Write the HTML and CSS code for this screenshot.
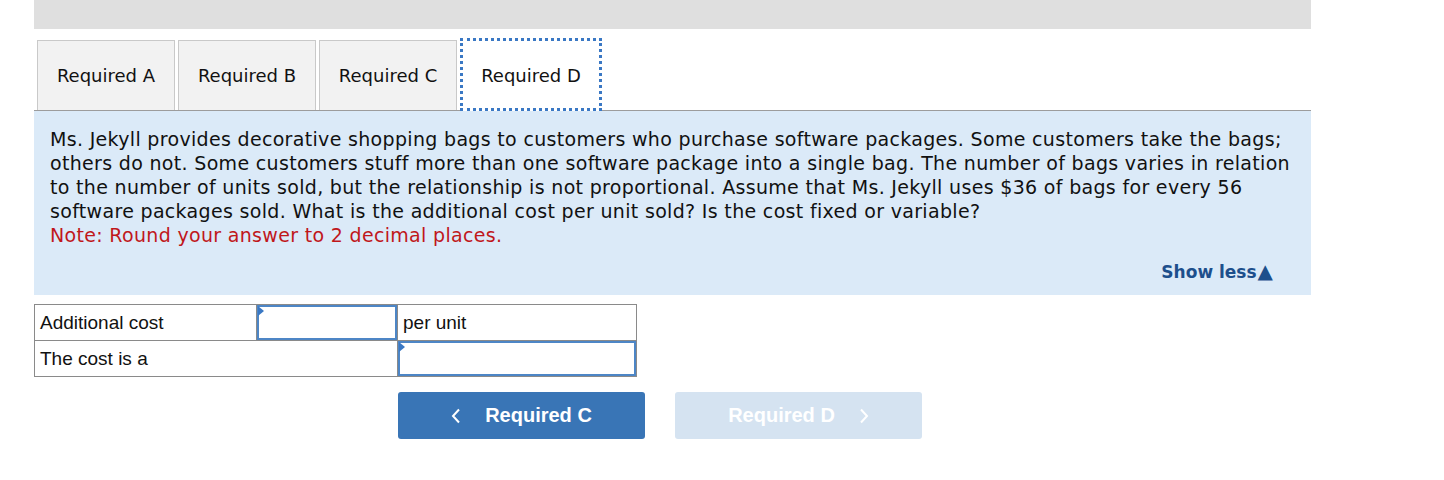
FILE: index.html
```html
<!DOCTYPE html>
<html lang="en">
<head>
  <meta charset="UTF-8">
  <title>Required D</title>
  <link rel="stylesheet" href="styles.css">
</head>
<body>
  <div class="page">
    <div class="topbar"></div>

    <div class="tabs">
      <div class="tab">Required A</div>
      <div class="tab">Required B</div>
      <div class="tab">Required C</div>
      <div class="tab tab-active">Required D</div>
    </div>

    <div class="panel">
      <p class="question">Ms. Jekyll provides decorative shopping bags to customers who purchase software packages. Some customers take the bags; others do not. Some customers stuff more than one software package into a single bag. The number of bags varies in relation to the number of units sold, but the relationship is not proportional. Assume that Ms. Jekyll uses $36 of bags for every 56 software packages sold. What is the additional cost per unit sold? Is the cost fixed or variable?<br>
      <span class="note">Note: Round your answer to 2 decimal places.</span></p>
      <div class="show-less">Show less<span class="arrow">&#9650;</span></div>
    </div>

    <table class="answer">
      <colgroup>
        <col class="col-label">
        <col class="col-input">
        <col class="col-unit">
      </colgroup>
      <tr>
        <td class="label">Additional cost</td>
        <td class="input-cell"><div class="input"></div></td>
        <td class="label">per unit</td>
      </tr>
      <tr>
        <td class="label" colspan="2">The cost is a</td>
        <td class="input-cell"><div class="input"></div></td>
      </tr>
    </table>

    <div class="nav">
      <button class="nav-btn prev">
        <svg class="chev" width="10" height="16" viewBox="0 0 10 16"><polyline points="8,1.5 2,8 8,14.5" /></svg>
        Required C
      </button>
      <button class="nav-btn next" disabled>
        Required D
        <svg class="chev" width="10" height="16" viewBox="0 0 10 16"><polyline points="2,1.5 8,8 2,14.5" /></svg>
      </button>
    </div>
  </div>
</body>
</html>
```

FILE: styles.css
```css
body {
  margin: 0;
  background: #fff;
  font-family: "DejaVu Sans", Verdana, sans-serif;
  color: #111;
}
.page {
  width: 1277px;
  margin-left: 34px;
}
.topbar {
  height: 29px;
  background-color: #dfdfdf;
}

/* tabs */
.tabs {
  display: flex;
  align-items: flex-end;
  gap: 3px;
  margin-top: 9px;
  padding-left: 3px;
  border-bottom: 1px solid #9c9c9c;
}
.tab {
  box-sizing: border-box;
  width: 138px;
  height: 70px;
  display: flex;
  align-items: center;
  justify-content: center;
  background-color: #f2f2f2;
  border: 1px solid #c9c9c9;
  border-bottom: none;
  font-size: 18px;
}
.tab-active {
  width: 142px;
  height: 73px;
  margin-bottom: -1px;
  padding-top: 2px;
  background-color: #fff;
  border: 3px dotted #3a78c4;
}

/* question */
.panel {
  height: 184px;
  box-sizing: border-box;
  background-color: #dbeaf8;
  padding: 16px 12px 0 16px;
  position: relative;
}
.question {
  margin: 0;
  font-size: 19px;
  line-height: 24px;
  letter-spacing: 0.32px;
}
.note {
  color: #c0171b;
}
.show-less {
  position: absolute;
  right: 38px;
  bottom: 13px;
  font-size: 17px;
  line-height: 20px;
  font-weight: bold;
  color: #1d4f8c;
}
.arrow {
  font-size: 20px;
  line-height: 1;
  margin-left: 1px;
}

/* answer table */
.answer {
  margin-top: 9px;
  width: 602px;
  table-layout: fixed;
  border-collapse: collapse;
  font-family: "Liberation Sans", Arial, sans-serif;
  font-size: 19px;
}
.col-label {
  width: 222px;
}
.col-input {
  width: 141px;
}
.col-unit {
  width: 239px;
}
.answer td {
  border: 1px solid #8a8a8a;
  height: 35px;
  padding: 0;
}
.answer td.label {
  padding-left: 5px;
}
.input {
  box-sizing: border-box;
  height: 35px;
  border: 2px solid #4d86c6;
  position: relative;
  background: #fff;
}
.input::before {
  content: "";
  position: absolute;
  left: -1px;
  top: -1px;
  border-left: 6px solid #3a78c4;
  border-top: 5px solid transparent;
  border-bottom: 5px solid transparent;
}

/* navigation */
.nav {
  display: flex;
  gap: 30px;
  margin-top: 15px;
  padding-left: 364px;
}
.nav-btn {
  width: 247px;
  height: 47px;
  display: flex;
  align-items: center;
  justify-content: center;
  gap: 24px;
  border: none;
  border-radius: 3px;
  font-family: "Liberation Sans", Arial, sans-serif;
  font-size: 20px;
  font-weight: bold;
  color: #fff;
}
.prev {
  background-color: #3975b6;
}
.next {
  background-color: #d5e3f1;
}
.chev polyline {
  fill: none;
  stroke: #fff;
  stroke-width: 2;
}
```
